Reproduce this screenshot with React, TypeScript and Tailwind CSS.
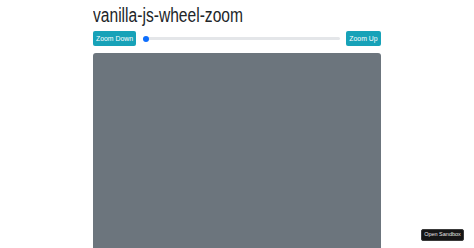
import React from "react";

export default function App() {
  return (
    <div className="relative h-[248px] w-[474px] overflow-hidden bg-white font-['Liberation_Sans',Arial,sans-serif] text-[#212529]">
      <div className="mx-auto w-[288px] pt-[3px]">
        <h1 className="h-[24px] whitespace-nowrap text-[19.5px] font-normal leading-[24px]">
          <span className="inline-block origin-left scale-x-[0.8]">vanilla-js-wheel-zoom</span>
        </h1>
        <div className="mt-[4px] flex h-[15px] items-center">
          <button className="flex h-[15px] w-[43px] items-center justify-center rounded-[2px] bg-[#17a2b8] text-[8px] leading-none text-white">
            <span className="inline-block scale-x-[0.86] whitespace-nowrap">Zoom Down</span>
          </button>
          <div className="relative ml-[7px] mr-[6px] flex h-[15px] flex-1 items-center">
            <div className="h-[3px] w-full rounded-full bg-[#e4e6e9]" />
            <div className="absolute left-0 top-[4.5px] h-[6px] w-[6px] rounded-full bg-[#0d6efd]" />
          </div>
          <button className="flex h-[15px] w-[35px] items-center justify-center rounded-[2px] bg-[#17a2b8] text-[8px] leading-none text-white">
            <span className="inline-block scale-x-[0.86] whitespace-nowrap">Zoom Up</span>
          </button>
        </div>
        <div className="mt-[7px] h-[195px] rounded-t-[3px] bg-[#6c757d]" />
      </div>
      <div className="absolute bottom-[7px] right-[10px] flex h-[12px] w-[43px] items-center justify-center rounded-[2px] border border-[#3a3a3a] bg-[#151515] text-[5.5px] leading-none text-[#e6e6e6]">
        <span className="whitespace-nowrap">Open Sandbox</span>
      </div>
    </div>
  );
}
